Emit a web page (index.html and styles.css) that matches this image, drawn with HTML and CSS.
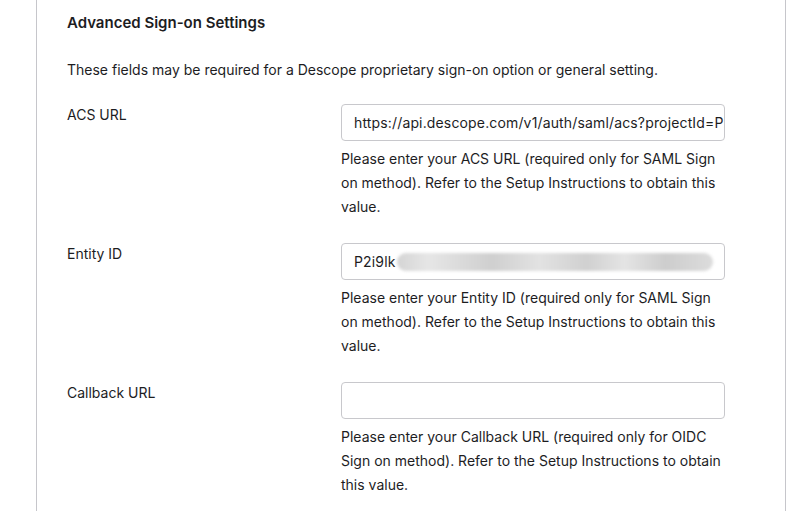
FILE: index.html
```html
<!DOCTYPE html>
<html>
<head>
<meta charset="utf-8">
<link rel="stylesheet" href="styles.css">
</head>
<body>
<div class="panel">
  <h2 class="title">Advanced Sign-on Settings</h2>
  <p class="desc">These fields may be required for a Descope proprietary sign-on option or general setting.</p>

  <div class="row">
    <div class="label">ACS URL</div>
    <div class="field">
      <div class="input"><span class="value">https://api.descope.com/v1/auth/saml/acs?projectId=P2i9lk</span></div>
      <p class="help">Please enter your ACS URL (required only for SAML Sign on method). Refer to the Setup Instructions to obtain this value.</p>
    </div>
  </div>

  <div class="row">
    <div class="label">Entity ID</div>
    <div class="field">
      <div class="input"><span class="value">P2i9lk</span><span class="blur"></span></div>
      <p class="help">Please enter your Entity ID (required only for SAML Sign on method). Refer to the Setup Instructions to obtain this value.</p>
    </div>
  </div>

  <div class="row">
    <div class="label">Callback URL</div>
    <div class="field">
      <div class="input"></div>
      <p class="help">Please enter your Callback URL (required only for OIDC Sign on method). Refer to the Setup Instructions to obtain this value.</p>
    </div>
  </div>
</div>
</body>
</html>
```

FILE: styles.css
```css
html, body {
  margin: 0;
  padding: 0;
  background: #fff;
}
body {
  font-family: Inter, "Noto Sans", "Liberation Sans", sans-serif;
  color: #1d1d1f;
  font-size: 14px;
  height: 511px;
  overflow: hidden;
}
.panel {
  margin-left: 36px;
  width: 718px;
  min-height: 511px;
  border-left: 1px solid #c6c6cb;
  border-right: 1px solid #c6c6cb;
  padding: 13px 0 0 30px;
  box-sizing: content-box;
}
.title {
  margin: 0;
  font-size: 15px;
  font-weight: 600;
  line-height: 20px;
  color: #1d1d1f;
}
.desc {
  margin: 27px 0 0;
  line-height: 20px;
  color: #1d1d1f;
}
.row {
  display: flex;
  margin-top: 24px;
}
.row + .row {
  margin-top: 24px;
}
.label {
  width: 274px;
  padding-top: 1px;
  line-height: 20px;
}
.field {
  width: 384px;
}
.input {
  height: 35px;
  border: 1px solid #c8c8cc;
  border-radius: 4px;
  display: flex;
  align-items: center;
  padding: 0 0 0 12px;
  overflow: hidden;
  white-space: nowrap;
}
.value {
  line-height: 20px;
  letter-spacing: 0.15px;
  flex: none;
}
.blur {
  flex: none;
  width: 316px;
  height: 18px;
  border-radius: 9px;
  margin-left: 1px;
  background: linear-gradient(90deg, #d4d4d4 0%, #e6e6e6 10%, #cfcfcf 30%, #e2e2e2 45%, #d0d0d0 60%, #e4e4e4 72%, #cdcdcd 85%, #dcdcdc 100%);
  filter: blur(1.5px);
}
.help {
  margin: 6px 0 0;
  line-height: 24px;
  color: #1d1d1f;
}
```
